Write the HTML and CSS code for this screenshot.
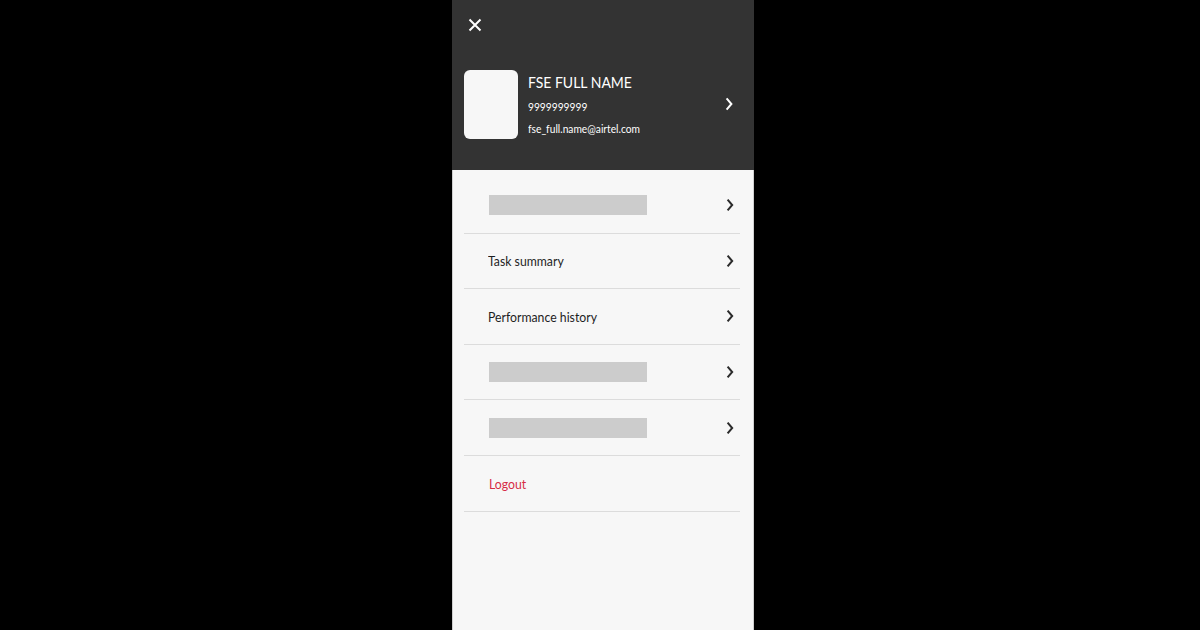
FILE: index.html
```html
<!DOCTYPE html>
<html lang="en">
<head>
<meta charset="utf-8">
<title>Menu</title>
<link rel="stylesheet" href="styles.css">
</head>
<body>
<div class="drawer">
  <header class="drawer-header">
    <div class="close-row">
      <svg class="close-icon" width="14" height="14" viewBox="0 0 14 14" aria-label="Close">
        <path d="M1.5 1.5 L12.5 12.5 M12.5 1.5 L1.5 12.5" stroke="#ffffff" stroke-width="2" fill="none"/>
      </svg>
    </div>
    <div class="profile">
      <div class="avatar"></div>
      <div class="profile-info">
        <div class="profile-name"><span class="narrow">FSE FULL NAME</span></div>
        <div class="profile-phone"><span class="narrow-small">9999999999</span></div>
        <div class="profile-email"><span class="narrow-small">fse_full.name@airtel.com</span></div>
      </div>
      <svg class="chevron chevron-light" width="8" height="14" viewBox="0 0 8 14">
        <path d="M1.6 1.4 L6.4 7 L1.6 12.6" stroke="#ffffff" stroke-width="2" fill="none"/>
      </svg>
    </div>
  </header>
  <nav class="menu">
    <div class="menu-item">
      <div class="placeholder"></div>
      <svg class="chevron" width="8" height="14" viewBox="0 0 8 14"><path d="M1.6 1.6 L6.2 7 L1.6 12.4" stroke="#2b2b2b" stroke-width="2" fill="none"/></svg>
    </div>
    <div class="menu-item">
      <span class="menu-label narrow">Task summary</span>
      <svg class="chevron" width="8" height="14" viewBox="0 0 8 14"><path d="M1.6 1.6 L6.2 7 L1.6 12.4" stroke="#2b2b2b" stroke-width="2" fill="none"/></svg>
    </div>
    <div class="menu-item">
      <span class="menu-label narrow">Performance history</span>
      <svg class="chevron" width="8" height="14" viewBox="0 0 8 14"><path d="M1.6 1.6 L6.2 7 L1.6 12.4" stroke="#2b2b2b" stroke-width="2" fill="none"/></svg>
    </div>
    <div class="menu-item">
      <div class="placeholder"></div>
      <svg class="chevron" width="8" height="14" viewBox="0 0 8 14"><path d="M1.6 1.6 L6.2 7 L1.6 12.4" stroke="#2b2b2b" stroke-width="2" fill="none"/></svg>
    </div>
    <div class="menu-item">
      <div class="placeholder"></div>
      <svg class="chevron" width="8" height="14" viewBox="0 0 8 14"><path d="M1.6 1.6 L6.2 7 L1.6 12.4" stroke="#2b2b2b" stroke-width="2" fill="none"/></svg>
    </div>
    <div class="menu-item">
      <span class="menu-label logout narrow">Logout</span>
    </div>
  </nav>
</div>
</body>
</html>
```
FILE: styles.css
```css
* {
  box-sizing: border-box;
}

html, body {
  margin: 0;
  padding: 0;
  height: 100%;
  background: #000000;
  font-family: Lato, "Open Sans", "Liberation Sans", sans-serif;
}

.drawer {
  margin-left: 452px;
  width: 302px;
  height: 630px;
  display: flex;
  flex-direction: column;
  background: #f7f7f7;
}

.drawer-header {
  background: #333333;
  height: 170px;
  padding: 0 12px;
  color: #ffffff;
  flex: none;
}

.close-row {
  height: 70px;
  padding-top: 17.5px;
  padding-left: 3.5px;
}

.close-icon {
  display: block;
}

.profile {
  display: flex;
  align-items: flex-start;
}

.avatar {
  width: 54px;
  height: 69px;
  background: #f7f7f7;
  border-radius: 6px;
  flex: none;
}

.profile-info {
  flex: 1;
  margin-left: 10px;
  padding-top: 1.5px;
}

.narrow {
  display: inline-block;
  transform: scaleX(0.875);
  transform-origin: left center;
  white-space: nowrap;
}

.narrow-small {
  display: inline-block;
  transform: scaleX(0.93);
  transform-origin: left center;
  white-space: nowrap;
}

.profile-name {
  font-size: 16px;
  line-height: 20px;
}

.profile-phone {
  font-size: 11px;
  line-height: 14px;
  margin-top: 8px;
}

.profile-email {
  font-size: 11px;
  line-height: 14px;
  margin-top: 8px;
}

.chevron {
  display: block;
  flex: none;
}

.chevron-light {
  margin-top: 27px;
  margin-right: 9px;
}

.menu {
  flex: 1;
  padding-top: 8px;
  border-left: 1px solid #cfcfcf;
  border-right: 1px solid #cfcfcf;
}

.menu-item {
  margin: 0 13px 0 11px;
  height: 55.6px;
  border-bottom: 1px solid #dcdcdc;
  display: flex;
  align-items: center;
  justify-content: space-between;
  padding: 0 6px 0 25px;
}

.placeholder {
  width: 158px;
  height: 20px;
  background: #cccccc;
}

.menu-label {
  font-size: 14px;
  color: #1e1e1e;
  margin-left: -1px;
}

.logout {
  color: #d62c45;
  margin-left: 0;
}
```
